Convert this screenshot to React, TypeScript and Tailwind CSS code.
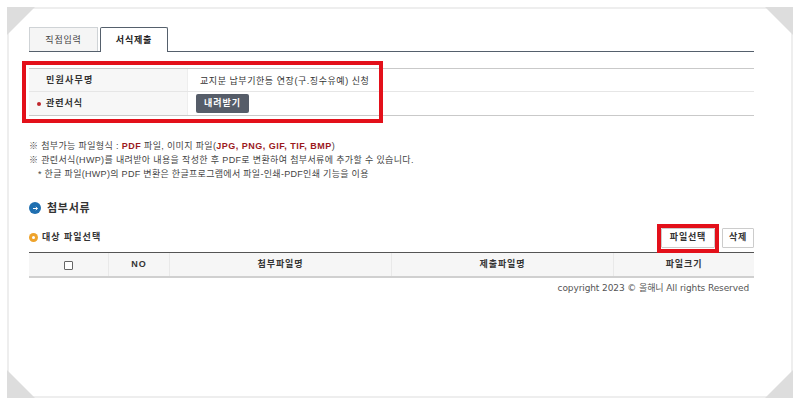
const korean = "font-['Liberation_Sans','Noto_Sans_CJK_KR',sans-serif]";

function Corner({ className, points }: { className: string; points: string }) {
  return (
    <svg aria-hidden="true" width="28" height="28" viewBox="0 0 28 28" className={`absolute ${className}`}>
      <polygon points={points} fill="#dddddd" />
    </svg>
  );
}

function FileHeaderCell({ className, children }: { className: string; children?: React.ReactNode }) {
  return (
    <div className={`flex items-center justify-center border-r border-[#e9e9e9] pt-[2px] text-[9px] font-bold tracking-[0.9px] text-[#333] last:border-r-0 ${className}`}>
      {children}
    </div>
  );
}

export default function App() {
  return (
    <div className={`h-[405px] w-[800px] overflow-hidden bg-white px-[7px] pt-[7px] pb-[7px] ${korean}`}>
      <div className="relative h-[391px] w-[786px] border-2 border-[#eeeeee] pl-[20px] pr-[37px] pt-[18px]">
        <Corner className="-left-[2px] -top-[2px]" points="0,0 28,0 0,28" />
        <Corner className="-right-[2px] -top-[2px]" points="0,0 28,0 28,28" />
        <Corner className="-bottom-[2px] -left-[2px]" points="0,0 28,28 0,28" />
        <Corner className="-bottom-[2px] -right-[2px]" points="28,0 28,28 0,28" />

        {/* tabs */}
        <div className="flex h-[25px] items-end border-b border-[#55606c]">
          <div className="flex h-[24px] w-[69px] items-center justify-center border border-b-0 border-[#cfd3d6] bg-[#f5f5f5] pt-[2px] text-[9px] tracking-[0.8px] text-[#444]">
            직접입력
          </div>
          <div className="relative top-px ml-[2px] flex h-[25px] w-[68px] items-center justify-center rounded-t-[2px] border border-b-0 border-[#55606c] bg-white pt-[2px] text-[9px] font-bold tracking-[0.8px] text-[#222]">
            서식제출
          </div>
        </div>

        {/* form info */}
        <div className="mt-[16px] border-y border-[#c9c9c9] text-[9px] text-[#333]">
          <div className="flex h-[23px] border-b border-[#e6e6e6]">
            <div className="flex w-[159px] items-center border-r border-[#eeeeee] bg-[#f7f7f7] pl-[17px] pt-px font-bold tracking-[1.2px]">
              민원사무명
            </div>
            <div className="flex flex-1 items-center pl-[12px] pt-[3px] tracking-[0.55px]">
              교지분 납부기한등 연장(구.징수유예) 신청
            </div>
          </div>
          <div className="flex h-[23px]">
            <div className="flex w-[159px] items-center gap-[5px] border-r border-[#eeeeee] bg-[#f7f7f7] pl-[8px] pt-px font-bold tracking-[1px]">
              <span className="size-[4px] rounded-full bg-[#c0272d]" />
              관련서식
            </div>
            <div className="flex flex-1 items-center pl-[8px]">
              <button className="flex h-[19px] w-[53px] items-center justify-center rounded-[2px] bg-[#565d69] pt-px text-[9px] font-bold tracking-[1px] text-white">
                내려받기
              </button>
            </div>
          </div>
        </div>

        {/* notes */}
        <div className="mt-[24px] flex flex-col gap-[1px] text-[9px] leading-[13px] tracking-[0.35px] text-[#444]">
          <p>
            ※ 첨부가능 파일형식 : <b className="tracking-[0.5px] text-[#9c1a1c]">PDF</b> 파일, 이미지 파일(
            <b className="tracking-[0.5px] text-[#9c1a1c]">JPG, PNG, GIF, TIF, BMP</b>)
          </p>
          <p>※ 관련서식(HWP)를 내려받아 내용을 작성한 후 PDF로 변환하여 첨부서류에 추가할 수 있습니다.</p>
          <p className="pl-[9px] tracking-[0.3px]">* 한글 파일(HWP)의 PDF 변환은 한글프로그램에서 파일-인쇄-PDF인쇄 기능을 이용</p>
        </div>

        {/* attachments */}
        <div className="mt-[19px] flex items-center gap-[6px] text-[11px] font-bold tracking-[0.7px] text-[#333]">
          <span className="flex size-[12px] items-center justify-center rounded-full bg-[#1f6fb0]">
            <svg width="7" height="7" viewBox="0 0 7 7" aria-hidden="true">
              <path d="M1 3.5h4.5M3.8 2l1.6 1.5L3.8 5" fill="none" stroke="#fff" strokeWidth="1" />
            </svg>
          </span>
          첨부서류
        </div>

        <div className="mt-[10px] flex h-[22px] items-center justify-between">
          <div className="flex items-center gap-[4px] text-[9px] font-bold tracking-[1px] text-[#333]">
            <span className="flex size-[9px] items-center justify-center rounded-full bg-[#eea32c]">
              <span className="size-[3px] rounded-full bg-white" />
            </span>
            대상 파일선택
          </div>
          <div className="flex gap-[7px] text-[9px] font-bold tracking-[0.8px] text-[#333]">
            <button className="flex h-[20px] w-[54px] items-center justify-center rounded-[1px] border border-[#cccccc] bg-white pt-px">
              파일선택
            </button>
            <button className="flex h-[20px] w-[32px] items-center justify-center rounded-[1px] border border-[#cccccc] bg-white pt-px">
              삭제
            </button>
          </div>
        </div>

        <div className="mt-[3px] flex h-[26px] border-t border-[#555555] border-b-2 border-b-[#d0d0d0] bg-[#f6f6f6]">
          <FileHeaderCell className="w-[80px]">
            <span className="size-[9px] rounded-[1px] border border-[#666666] bg-white" />
          </FileHeaderCell>
          <FileHeaderCell className="w-[61px]">NO</FileHeaderCell>
          <FileHeaderCell className="w-[222px]">첨부파일명</FileHeaderCell>
          <FileHeaderCell className="w-[222px]">제출파일명</FileHeaderCell>
          <FileHeaderCell className="flex-1">파일크기</FileHeaderCell>
        </div>

        <p className="mt-[4px] pr-[5px] text-right font-['DejaVu_Sans','Noto_Sans_CJK_KR',sans-serif] text-[9px] leading-[12px] tracking-[-0.1px] text-[#555]">
          copyright 2023 © 올해니 All rights Reserved
        </p>

        {/* red highlights */}
        <div className="absolute left-[13px] top-[52px] h-[62px] w-[361px] border-[4px] border-[#e3101a]" />
        <div className="absolute left-[648px] top-[215px] h-[29px] w-[62px] border-[4px] border-[#e3101a]" />
      </div>
    </div>
  );
}
